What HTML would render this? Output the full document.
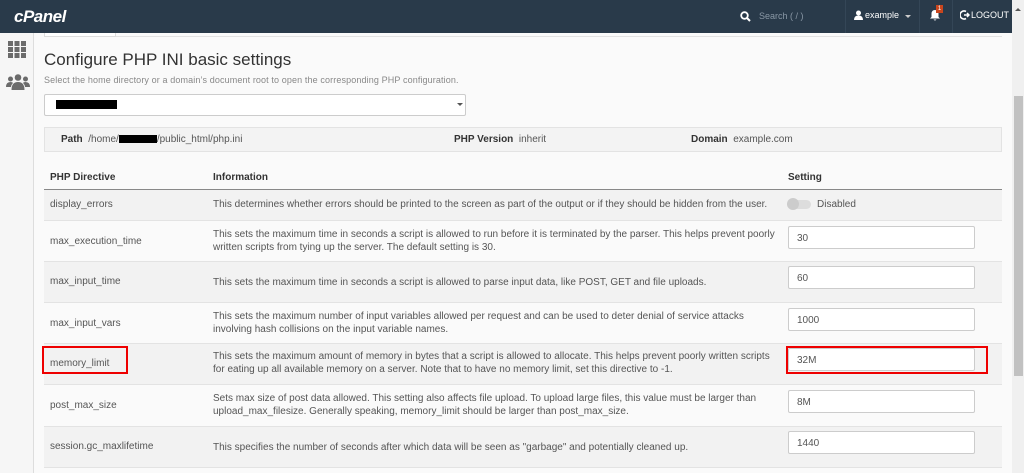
<!DOCTYPE html>
<html><head><style>
*{box-sizing:border-box;margin:0;padding:0}
body{width:1024px;height:473px;overflow:hidden;background:#fafafa;font-family:"Liberation Sans",sans-serif;color:#333;position:relative}
.top{position:absolute;left:0;top:0;width:1012px;height:33px;background:#293a4a;color:#fff}
.side{position:absolute;left:0;top:33px;width:34px;height:440px;background:#f6f6f6;border-right:1px solid #ddd}
.sb{position:absolute;left:1012px;top:0;width:12px;height:473px;background:#f0f0f0}
.thumb{position:absolute;left:1014px;top:96px;width:9px;height:280px;background:#c1c1c1}
.abs{position:absolute}
.t{font-size:10px}
.row{position:absolute;left:44px;width:958px;border-top:1px solid #e3e3e3}
.sh{background:#f2f2f2}
.inp{position:absolute;left:788px;width:187px;height:23px;background:#fff;border:1px solid #ccc;border-radius:2px;font-size:10px;padding:6px 8px;color:#555}
.d{position:absolute;left:6px;font-size:10px;color:#555}
.i{position:absolute;left:169px;font-size:10px;color:#555;line-height:13px;width:570px}
</style></head><body>
<div class="top">
 <div class="abs" style="left:14px;top:7px;font-size:17px;font-weight:bold;font-style:italic;letter-spacing:-0.5px">cPanel</div>
 <svg class="abs" style="left:740px;top:11px" width="11" height="11" viewBox="0 0 11 11"><circle cx="4.5" cy="4.5" r="3.3" fill="none" stroke="#fff" stroke-width="1.8"/><line x1="7" y1="7" x2="10" y2="10" stroke="#fff" stroke-width="2"/></svg>
 <div class="abs t" style="left:759px;top:11px;color:#8a98a6;font-size:9px">Search ( / )</div>
 <div class="abs" style="left:845px;top:0;width:1px;height:33px;background:#344657"></div>
 <svg class="abs" style="left:854px;top:10px" width="9" height="10" viewBox="0 0 9 10"><circle cx="4.5" cy="3" r="2.5" fill="#fff"/><path d="M0 10 Q0 5.5 4.5 5.5 Q9 5.5 9 10Z" fill="#fff"/></svg>
 <div class="abs t" style="left:865px;top:10px;font-size:9px">example</div>
 <div class="abs" style="left:905px;top:15px;border:3px solid transparent;border-top-color:#ccc"></div>
 <div class="abs" style="left:919px;top:0;width:1px;height:33px;background:#344657"></div>
 <svg class="abs" style="left:930px;top:9px" width="10" height="12" viewBox="0 0 10 12"><path d="M5 1 Q1.5 1 1.5 5 L1.5 8 L0 9.5 L10 9.5 L8.5 8 L8.5 5 Q8.5 1 5 1Z M3.5 10.5 Q5 12.5 6.5 10.5Z" fill="#fff"/></svg>
 <div class="abs" style="left:936px;top:5px;width:7px;height:8px;background:#c9461e;color:#fff;font-size:6px;text-align:center;line-height:8px">1</div>
 <div class="abs" style="left:952px;top:0;width:1px;height:33px;background:#344657"></div>
 <svg class="abs" style="left:960px;top:10px" width="10" height="10" viewBox="0 0 10 10"><path d="M6 1.5 A4 4 0 1 0 6 8.5" fill="none" stroke="#fff" stroke-width="1.6"/><path d="M4 5 H9 M7 3 L9 5 L7 7" fill="none" stroke="#fff" stroke-width="1.5"/></svg>
 <div class="abs t" style="left:971px;top:10px;font-size:9px">LOGOUT</div>
</div>
<div class="side">
 <svg class="abs" style="left:8px;top:8px" width="18" height="17" viewBox="0 0 18 17"><g fill="#6b6b6b"><rect x="0" y="0" width="5" height="5"/><rect x="6.5" y="0" width="5" height="5"/><rect x="13" y="0" width="5" height="5"/><rect x="0" y="6" width="5" height="5"/><rect x="6.5" y="6" width="5" height="5"/><rect x="13" y="6" width="5" height="5"/><rect x="0" y="12" width="5" height="5"/><rect x="6.5" y="12" width="5" height="5"/><rect x="13" y="12" width="5" height="5"/></g></svg>
 <svg class="abs" style="left:6px;top:41px" width="24" height="16" viewBox="0 0 24 16"><g fill="#6b6b6b"><circle cx="12" cy="3.5" r="3.3"/><circle cx="4.5" cy="5" r="2.5"/><circle cx="19.5" cy="5" r="2.5"/><path d="M5.5 16 Q5.5 8 12 8 Q18.5 8 18.5 16Z"/><path d="M0 13 Q0 8 4.5 8 Q6.5 8 7 9 Q5 11 5 13Z"/><path d="M24 13 Q24 8 19.5 8 Q17.5 8 17 9 Q19 11 19 13Z"/></g></svg>
</div>
<div class="abs" style="left:44px;top:33px;width:72px;height:4px;border:1px solid #ddd;border-top:none;background:#fff"></div>
<div class="abs" style="left:116px;top:36px;width:886px;height:1px;background:#e2e2e2"></div>
<div class="abs" style="left:44px;top:50px;font-size:17px;color:#333">Configure PHP INI basic settings</div>
<div class="abs" style="left:44px;top:75px;font-size:9px;color:#888;letter-spacing:0.12px">Select the home directory or a domain’s document root to open the corresponding PHP configuration.</div>
<div class="abs" style="left:44px;top:94px;width:422px;height:22px;background:#fff;border:1px solid #ccc;border-radius:2px"></div>
<div class="abs" style="left:56px;top:100px;width:61px;height:9px;background:#000"></div>
<div class="abs" style="left:457px;top:103px;border:3px solid transparent;border-top-color:#555"></div>
<div class="abs" style="left:44px;top:127px;width:958px;height:25px;background:#f3f3f3;border:1px solid #e3e3e3"></div>
<div class="abs t" style="left:61px;top:134px;color:#555"><b style="color:#333">Path</b>&nbsp; /home/<span style="display:inline-block;width:38px;height:8px;background:#000;vertical-align:middle"></span>/public_html/php.ini</div>
<div class="abs t" style="left:454px;top:134px;color:#555"><b style="color:#333">PHP Version</b>&nbsp; inherit</div>
<div class="abs t" style="left:691px;top:134px;color:#555"><b style="color:#333">Domain</b>&nbsp; example.com</div>
<div class="abs t" style="left:50px;top:172px;font-weight:bold">PHP Directive</div>
<div class="abs t" style="left:213px;top:172px;font-weight:bold">Information</div>
<div class="abs t" style="left:788px;top:172px;font-weight:bold">Setting</div>
<div class="abs" style="left:44px;top:189px;width:958px;height:1px;background:#888"></div>

<div class="row sh" style="top:190px;height:30px;border-top:none"><div class="d" style="top:9px">display_errors</div><div class="i" style="top:8px;width:600px">This determines whether errors should be printed to the screen as part of the output or if they should be hidden from the user.</div>
 <div class="abs" style="left:743px;top:10px;width:24px;height:9px;background:#ddd;border-radius:5px"></div><div class="abs" style="left:743px;top:8px;width:12px;height:12px;background:#ccc;border-radius:6px"></div><div class="abs t" style="left:773px;top:9px;color:#555">Disabled</div></div>
<div class="row" style="top:220px;height:41px"><div class="d" style="top:15px">max_execution_time</div><div class="i" style="top:7px">This sets the maximum time in seconds a script is allowed to run before it is terminated by the parser. This helps prevent poorly written scripts from tying up the server. The default setting is 30.</div><div class="inp" style="left:744px;top:5px">30</div></div>
<div class="row sh" style="top:261px;height:41px"><div class="d" style="top:14px">max_input_time</div><div class="i" style="top:14px;width:650px">This sets the maximum time in seconds a script is allowed to parse input data, like POST, GET and file uploads.</div><div class="inp" style="left:744px;top:4px">60</div></div>
<div class="row" style="top:302px;height:41px"><div class="d" style="top:15px">max_input_vars</div><div class="i" style="top:7px">This sets the maximum number of input variables allowed per request and can be used to deter denial of service attacks involving hash collisions on the input variable names.</div><div class="inp" style="left:744px;top:5px">1000</div></div>
<div class="row sh" style="top:343px;height:41px"><div class="d" style="top:14px">memory_limit</div><div class="i" style="top:6px">This sets the maximum amount of memory in bytes that a script is allowed to allocate. This helps prevent poorly written scripts for eating up all available memory on a server. Note that to have no memory limit, set this directive to -1.</div><div class="inp" style="left:744px;top:4px">32M</div>
 <div class="abs" style="left:-2px;top:2px;width:86px;height:28px;border:2px solid #e00"></div>
 <div class="abs" style="left:742px;top:2px;width:202px;height:28px;border:2px solid #e00"></div></div>
<div class="row" style="top:384px;height:42px"><div class="d" style="top:15px">post_max_size</div><div class="i" style="top:7px">Sets max size of post data allowed. This setting also affects file upload. To upload large files, this value must be larger than upload_max_filesize. Generally speaking, memory_limit should be larger than post_max_size.</div><div class="inp" style="left:744px;top:5px">8M</div></div>
<div class="row sh" style="top:426px;height:41px"><div class="d" style="top:14px">session.gc_maxlifetime</div><div class="i" style="top:14px;width:650px">This specifies the number of seconds after which data will be seen as "garbage" and potentially cleaned up.</div><div class="inp" style="left:744px;top:4px">1440</div></div>
<div class="row" style="top:467px;height:6px;background:#fafafa"></div>
<div class="sb"></div><div class="thumb"></div>
<div class="abs" style="left:1015px;top:5px;border:3px solid transparent;border-bottom-color:#555"></div>
</body></html>
